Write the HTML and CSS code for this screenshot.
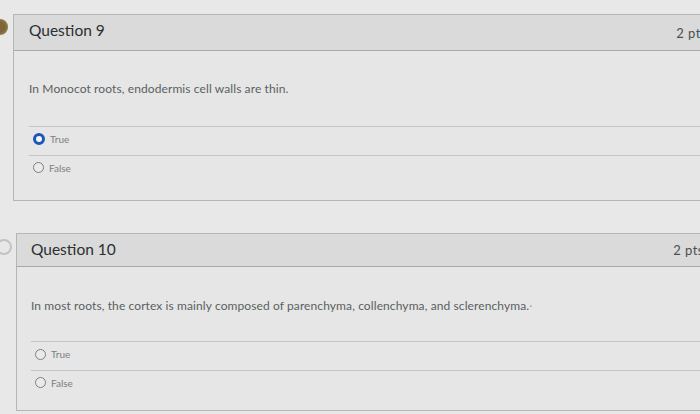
FILE: index.html
```html
<!DOCTYPE html>
<html>
<head>
<meta charset="utf-8">
<link rel="stylesheet" href="styles.css">
</head>
<body>
<div class="page">
  <div class="card q9">
    <span class="marker filled"></span>
    <div class="head">
      <span class="title">Question 9</span>
      <span class="pts">2 pts</span>
    </div>
    <div class="body">
      <p class="text">In Monocot roots, endodermis cell walls are thin.</p>
      <div class="answers">
        <div class="ans"><span class="radio on"></span><span>True</span></div>
        <div class="ans"><span class="radio"></span><span>False</span></div>
      </div>
    </div>
  </div>
  <div class="card q10">
    <span class="marker"></span>
    <div class="head">
      <span class="title">Question 10</span>
      <span class="pts">2 pts</span>
    </div>
    <div class="body">
      <p class="text">In most roots, the cortex is mainly composed of parenchyma, collenchyma, and sclerenchyma.<span class="dot">·</span></p>
      <div class="answers">
        <div class="ans"><span class="radio"></span><span>True</span></div>
        <div class="ans"><span class="radio"></span><span>False</span></div>
      </div>
    </div>
  </div>
</div>
</body>
</html>
```
FILE: styles.css
```css
html, body {
  margin: 0;
  padding: 0;
  width: 700px;
  height: 414px;
  overflow: hidden;
  background: #e7e8e7;
  font-family: Lato, "Open Sans", sans-serif;
}
.page {
  display: flex;
  flex-direction: column;
  overflow: hidden;
}
.card {
  position: relative;
  width: 720px;
  border: 1px solid #b4b6b5;
  border-right: none;
  background: #e5e6e5;
  box-sizing: border-box;
}
.q9 {
  margin: 14px 0 0 13px;
  height: 187px;
}
.q10 {
  margin: 32px 0 0 16px;
  height: 178px;
}
.marker {
  position: absolute;
  left: -21px;
  top: 5px;
  width: 16px;
  height: 16px;
  border-radius: 50%;
  box-sizing: border-box;
  border: 2px solid #c2c3c2;
  background: transparent;
}
.q9 .marker { left: -22px; top: 4px; }
.marker.filled {
  background: #7f6638;
  border-color: #8d7444;
}
.head {
  display: flex;
  justify-content: space-between;
  align-items: center;
  height: 36px;
  background: #d9dad9;
  border-bottom: 1px solid #a9abaa;
  box-sizing: border-box;
  padding: 0 0 5px 15px;
}
.q10 .head { height: 33px; padding-left: 14px; padding-bottom: 3px; }
.title {
  font-size: 15.5px;
  color: #2b2f31;
}
.pts {
  font-size: 13px;
  color: #4b4f51;
  margin-right: 26px;
  padding-top: 6px;
  letter-spacing: 0.5px;
}
.q10 .pts { margin-right: 32px; padding-top: 3px; }
.body {
  padding: 0 0 0 15px;
}
.q10 .body { padding-left: 14px; }
.text {
  margin: 0;
  padding-top: 30px;
  height: 45px;
  font-size: 12px;
  color: #5b5f62;
  letter-spacing: 0.1px;
}
.q10 .text { padding-top: 31px; height: 43px; }
.dot { color: #aaa; }
.answers {
  border-top: 1px solid #c3c5c4;
}
.ans {
  display: flex;
  align-items: center;
  gap: 5px;
  height: 28px;
  padding-left: 4px;
  padding-bottom: 4px;
  font-size: 10px;
  color: #7b7f82;
  box-sizing: border-box;
}
.ans + .ans {
  border-top: 1px solid #c3c5c4;
}
.radio {
  width: 11px;
  height: 11px;
  border-radius: 50%;
  border: 1.5px solid #7d8083;
  box-sizing: border-box;
  background: #e9eae9;
}
.radio.on {
  border: 3px solid #1b56b8;
  background: #f4f6fa;
  width: 12px;
  height: 12px;
}
```
